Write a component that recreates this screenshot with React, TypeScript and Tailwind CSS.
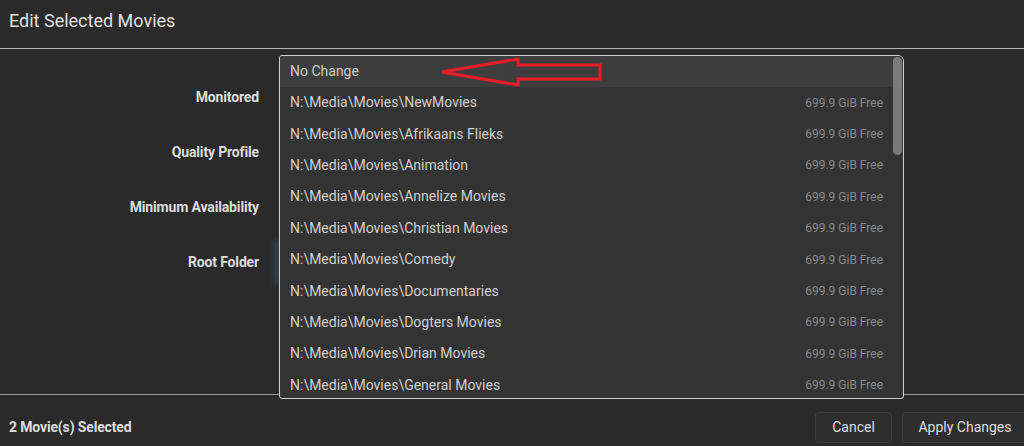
import * as React from "react";

const folders = [
  "NewMovies",
  "Afrikaans Flieks",
  "Animation",
  "Annelize Movies",
  "Christian Movies",
  "Comedy",
  "Documentaries",
  "Dogters Movies",
  "Drian Movies",
  "General Movies",
];

const labels = ["Monitored", "Quality Profile", "Minimum Availability", "Root Folder"];

function RedArrow() {
  return (
    <svg className="absolute left-[160px] top-0 pointer-events-none" width="166" height="32" viewBox="0 0 166 32">
      <polygon
        points="2,16 78,3 78,9 160,9 160,23 78,23 78,29"
        fill="none"
        stroke="#ec1c24"
        strokeWidth="3"
        strokeLinejoin="miter"
      />
    </svg>
  );
}

export default function App() {
  return (
    <div className="relative h-[446px] w-[1024px] overflow-hidden bg-[#2a2a2a] font-['Roboto',sans-serif] text-[#ccc]">
      <div className="flex h-[49px] items-center border-b border-[#b5b5b5] px-[9px] pb-[8px] text-[18px] text-[#e1e1e1]">
        Edit Selected Movies
      </div>

      <div className="flex h-[346px] flex-col gap-[35px] border-b border-[#9a9a9a] pt-[38px]">
        {labels.map((l) => (
          <div key={l} className="flex h-[20px] items-center">
            <div className="w-[259px] text-right text-[14px] font-bold tracking-[-0.15px] text-[#ddd]">{l}</div>
          </div>
        ))}
      </div>

      <div className="flex h-[51px] items-center justify-between pl-[9px] pt-[14px]">
        <div className="text-[14px] font-bold tracking-[-0.15px] text-[#ddd]">2 Movie(s) Selected</div>
        <div className="flex gap-[10px]">
          <button className="h-[31px] w-[77px] rounded-[4px] border border-[#3c3c3c] bg-[#2e2e2e] text-[14px] leading-[29px] text-[#ddd]">
            Cancel
          </button>
          <button className="-mr-[4px] h-[31px] w-[126px] rounded-[4px] border border-[#3c3c3c] bg-[#2e2e2e] text-[14px] leading-[29px] text-[#ddd]">
            Apply Changes
          </button>
        </div>
      </div>

      {/* focus glow of the select underneath the menu */}
      <div className="pointer-events-none absolute left-[274px] top-[240px] h-[44px] w-[8px] rounded-full bg-[#3a6a9a] opacity-40 blur-[3px]" />

      <div className="absolute left-[279px] top-[55px] h-[344px] w-[625px] overflow-hidden rounded-[3px] rounded-tr-[6px] border border-[#cfcfcf] bg-[#333]">
        <div className="relative flex h-[31px] items-center bg-[#3d3d3d] pl-[10px] text-[14px] text-[#ccc]">
          No Change
          <RedArrow />
        </div>
        {folders.map((f) => (
          <div key={f} className="flex h-[31.4px] items-center justify-between pl-[10px] pr-[20px] text-[14px]">
            <span className="text-[#cfcfcf]">N:\Media\Movies\{f}</span>
            <span className="text-[12px] text-[#8a8a8a]">699.9 GiB Free</span>
          </div>
        ))}
        <div className="absolute right-[1px] top-[1px] h-[98px] w-[9px] rounded-full bg-[#7a7a7a]" />
      </div>
    </div>
  );
}
